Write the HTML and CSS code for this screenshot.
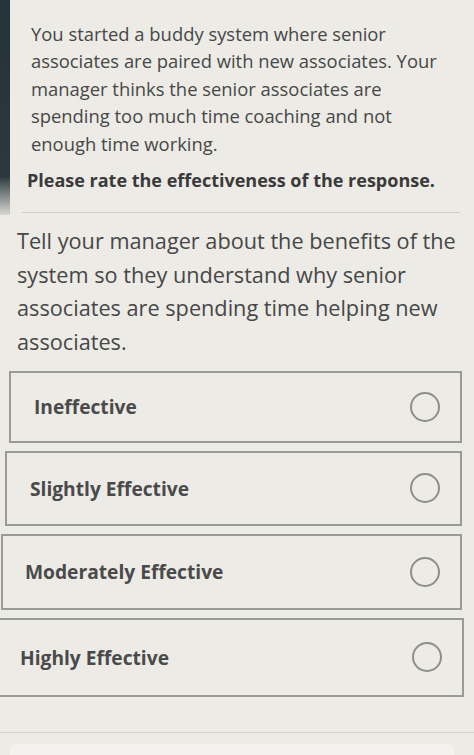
FILE: index.html
```html
<!DOCTYPE html>
<html lang="en">
<head>
<meta charset="utf-8">
<link rel="stylesheet" href="styles.css">
</head>
<body>
<div class="screen">
  <div class="bezel"></div>
  <main class="content">
    <section class="scenario">
      <p class="scenario-text">You started a buddy system where senior associates are paired with new associates. Your manager thinks the senior associates are spending too much time coaching and not enough time working.</p>
      <p class="prompt">Please rate the effectiveness of the response.</p>
    </section>
    <hr class="divider">
    <p class="response">Tell your manager about the benefits of the system so they understand why senior associates are spending time helping new associates.</p>
    <div class="options">
      <label class="option opt-1"><span class="option-label">Ineffective</span><span class="radio"></span></label>
      <label class="option opt-2"><span class="option-label">Slightly Effective</span><span class="radio"></span></label>
      <label class="option opt-3"><span class="option-label">Moderately Effective</span><span class="radio"></span></label>
      <label class="option opt-4"><span class="option-label">Highly Effective</span><span class="radio"></span></label>
    </div>
    <div class="footer-line"></div>
    <div class="footer-box"></div>
  </main>
</div>
</body>
</html>
```
FILE: styles.css
```css
html, body {
  margin: 0;
  padding: 0;
  background: #ecebe5;
}
body {
  font-family: "Open Sans", "Noto Sans", sans-serif;
  color: #3f3f3f;
  width: 474px;
  height: 755px;
  overflow: hidden;
}
.screen {
  display: flex;
  align-items: flex-start;
  height: 755px;
  position: relative;
}
.bezel {
  position: absolute;
  left: 0;
  top: 0;
  width: 10px;
  height: 215px;
  background: linear-gradient(#25333a, #2b393d 82%, #d8d8d2);
}
.content {
  flex: 1;
  display: flex;
  flex-direction: column;
}
.scenario {
  padding: 20px 12px 0 31px;
}
.scenario-text {
  margin: 0 10px 0 0;
  font-size: 18.4px;
  line-height: 27.4px;
  color: #474747;
}
.prompt {
  margin: 11px 0 0 -4px;
  font-size: 18px;
  font-weight: 700;
  line-height: 24px;
  color: #3a3a3a;
}
.divider {
  margin: 20px 14px 0 22px;
  border: 0;
  border-top: 1px solid #cbcac4;
}
.response {
  margin: 11px 10px 0 17px;
  font-size: 21.7px;
  line-height: 33.7px;
  color: #474747;
}
.options {
  margin-top: 12px;
  display: flex;
  flex-direction: column;
  gap: 8px;
}
.option {
  display: flex;
  align-items: center;
  justify-content: space-between;
  height: 71px;
  border: 2px solid #9a9a96;
  padding: 0 20px 0 22px;
  margin-right: 12px;
}
.opt-1 { height: 68px; margin-left: 9px; padding-left: 23px; }
.opt-2 { height: 71px; margin-left: 5px; padding-left: 23px; }
.opt-3 { height: 72px; margin-left: 1px; padding-left: 22px; }
.opt-4 { height: 75px; margin-left: -2px; margin-right: 10px; padding-left: 20px; }
.option-label {
  font-size: 19.2px;
  font-weight: 700;
  color: #4a4a4a;
}
.radio {
  width: 26px;
  height: 26px;
  border: 2px solid #8e8e8a;
  border-radius: 50%;
}
.footer-line {
  margin-top: 35px;
  height: 1px;
  background: #d6d5cf;
}
.footer-box {
  margin: 11px 20px 0 10px;
  height: 30px;
  background: #f3f2ee;
  border-radius: 8px 8px 0 0;
}
```
